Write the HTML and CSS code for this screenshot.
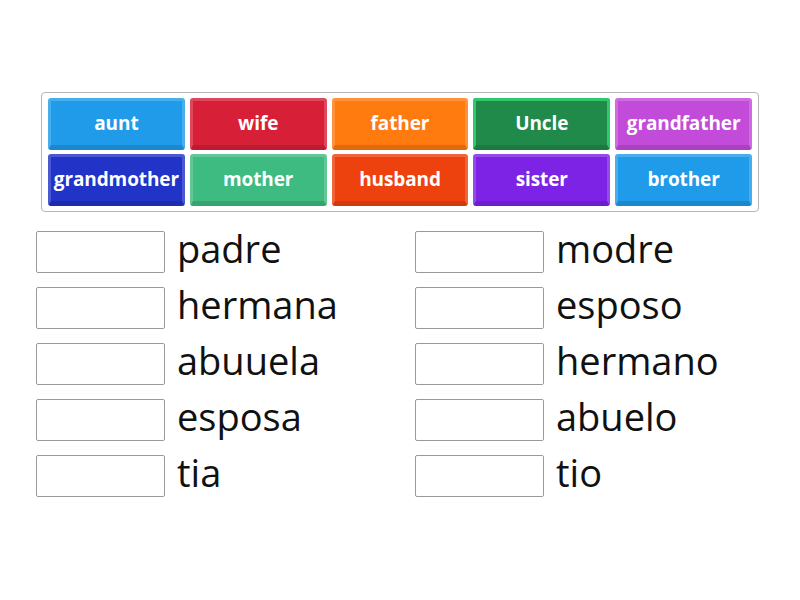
FILE: index.html
```html
<!DOCTYPE html>
<html>
<head>
<meta charset="utf-8">
<link rel="stylesheet" href="styles.css">
</head>
<body>
<div class="page">
  <div class="bank">
    <div class="tile c-blue">aunt</div>
    <div class="tile c-red">wife</div>
    <div class="tile c-orange">father</div>
    <div class="tile c-green">Uncle</div>
    <div class="tile c-pink">grandfather</div>
    <div class="tile c-navy">grandmother</div>
    <div class="tile c-mint">mother</div>
    <div class="tile c-redorange">husband</div>
    <div class="tile c-purple">sister</div>
    <div class="tile c-blue">brother</div>
  </div>
  <div class="pairs">
    <div class="pair"><div class="slot"></div><span class="word">padre</span></div>
    <div class="pair"><div class="slot"></div><span class="word">modre</span></div>
    <div class="pair"><div class="slot"></div><span class="word">hermana</span></div>
    <div class="pair"><div class="slot"></div><span class="word">esposo</span></div>
    <div class="pair"><div class="slot"></div><span class="word">abuuela</span></div>
    <div class="pair"><div class="slot"></div><span class="word">hermano</span></div>
    <div class="pair"><div class="slot"></div><span class="word">esposa</span></div>
    <div class="pair"><div class="slot"></div><span class="word">abuelo</span></div>
    <div class="pair"><div class="slot"></div><span class="word">tia</span></div>
    <div class="pair"><div class="slot"></div><span class="word">tio</span></div>
  </div>
</div>
</body>
</html>
```
FILE: styles.css
```css
html, body {
  margin: 0;
  padding: 0;
  background: #ffffff;
}
body {
  font-family: "Open Sans", "DejaVu Sans", sans-serif;
  width: 800px;
  height: 600px;
  overflow: hidden;
}
.page {
  padding-top: 92px;
}
.bank {
  margin-left: 41px;
  width: 704px;
  padding: 5px 6px 5px 6px;
  border: 1px solid #b4b4b4;
  border-radius: 4px;
  display: grid;
  grid-template-columns: repeat(5, 1fr);
  grid-auto-rows: 52px;
  gap: 4px 5px;
}
.tile {
  box-sizing: border-box;
  border-radius: 3px;
  border: 3px solid rgba(255,255,255,0.18);
  border-top-width: 3px;
  border-bottom: 5px solid rgba(0,0,0,0.12);
  color: #ffffff;
  font-weight: 700;
  font-size: 19px;
  display: flex;
  align-items: center;
  justify-content: center;
  white-space: nowrap;
  letter-spacing: -0.1px;
}
.c-blue { background: #1f9be9; }
.c-red { background: #d81f38; }
.c-orange { background: #ff7a0f; }
.c-green { background: #1f8a4a; border-color: #2fc86c; border-bottom-color: #1a7a40; }
.c-pink { background: #c24cd9; }
.c-navy { background: #2233c8; }
.c-mint { background: #3ebb80; }
.c-redorange { background: #ee420e; }
.c-purple { background: #7d23e6; }
.pairs {
  margin-top: 19px;
  margin-left: 36px;
  display: grid;
  grid-template-columns: 379px 379px;
  grid-auto-rows: 42px;
  row-gap: 14px;
}
.pair {
  display: flex;
  align-items: center;
}
.slot {
  box-sizing: border-box;
  width: 129px;
  height: 42px;
  border: 1px solid #9a9a9a;
  border-radius: 2px;
  flex: none;
}
.word {
  margin-left: 12px;
  margin-bottom: 8px;
  font-size: 38px;
  color: #111111;
  line-height: 42px;
}
```
